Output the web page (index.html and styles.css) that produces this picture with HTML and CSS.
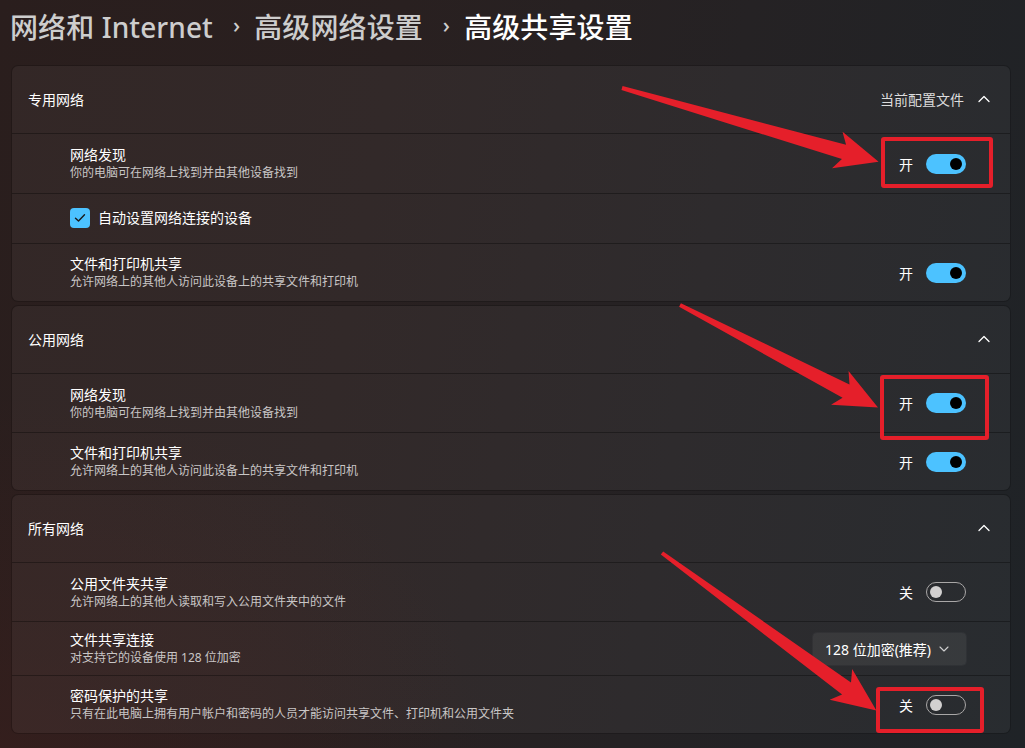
FILE: index.html
```html
<!DOCTYPE html>
<html lang="zh-CN">
<head>
<meta charset="utf-8">
<title>高级共享设置</title>
<link rel="stylesheet" href="styles.css">
</head>
<body>
<div class="page">
  <h1 class="crumbs">
    <span class="crumb">网络和 Internet</span>
    <span class="sep">›</span>
    <span class="crumb">高级网络设置</span>
    <span class="sep">›</span>
    <span class="crumb current">高级共享设置</span>
  </h1>

  <section class="card">
    <div class="head">
      <span class="head-title">专用网络</span>
      <span class="head-note">当前配置文件</span>
      <span class="chev"><svg width="12" height="8" viewBox="0 0 12 8"><path d="M1 6.5 L6 1.5 L11 6.5" fill="none" stroke="#fff" stroke-width="1.3" stroke-linecap="round" stroke-linejoin="round"/></svg></span>
    </div>
    <div class="row r60">
      <div class="text"><div class="t">网络发现</div><div class="s">你的电脑可在网络上找到并由其他设备找到</div></div>
      <div class="ctrl"><span class="state">开</span><span class="toggle on"><span class="knob"></span></span></div>
    </div>
    <div class="row r50">
      <label class="check"><span class="box"><svg width="12" height="10" viewBox="0 0 12 10"><path d="M1.5 5.2 L4.5 8 L10.5 1.8" fill="none" stroke="#1a1a1a" stroke-width="1.4" stroke-linecap="round" stroke-linejoin="round"/></svg></span><span class="t">自动设置网络连接的设备</span></label>
    </div>
    <div class="row r58">
      <div class="text"><div class="t">文件和打印机共享</div><div class="s">允许网络上的其他人访问此设备上的共享文件和打印机</div></div>
      <div class="ctrl"><span class="state">开</span><span class="toggle on"><span class="knob"></span></span></div>
    </div>
  </section>

  <section class="card">
    <div class="head">
      <span class="head-title">公用网络</span>
      <span class="chev"><svg width="12" height="8" viewBox="0 0 12 8"><path d="M1 6.5 L6 1.5 L11 6.5" fill="none" stroke="#fff" stroke-width="1.3" stroke-linecap="round" stroke-linejoin="round"/></svg></span>
    </div>
    <div class="row r59">
      <div class="text"><div class="t">网络发现</div><div class="s">你的电脑可在网络上找到并由其他设备找到</div></div>
      <div class="ctrl"><span class="state">开</span><span class="toggle on"><span class="knob"></span></span></div>
    </div>
    <div class="row r58">
      <div class="text"><div class="t">文件和打印机共享</div><div class="s">允许网络上的其他人访问此设备上的共享文件和打印机</div></div>
      <div class="ctrl"><span class="state">开</span><span class="toggle on"><span class="knob"></span></span></div>
    </div>
  </section>

  <section class="card">
    <div class="head">
      <span class="head-title">所有网络</span>
      <span class="chev"><svg width="12" height="8" viewBox="0 0 12 8"><path d="M1 6.5 L6 1.5 L11 6.5" fill="none" stroke="#fff" stroke-width="1.3" stroke-linecap="round" stroke-linejoin="round"/></svg></span>
    </div>
    <div class="row r59">
      <div class="text"><div class="t">公用文件夹共享</div><div class="s">允许网络上的其他人读取和写入公用文件夹中的文件</div></div>
      <div class="ctrl"><span class="state">关</span><span class="toggle off"><span class="knob"></span></span></div>
    </div>
    <div class="row r54">
      <div class="text"><div class="t">文件共享连接</div><div class="s">对支持它的设备使用 128 位加密</div></div>
      <div class="ctrl"><span class="select">128 位加密(推荐)<svg width="10" height="6" viewBox="0 0 10 6"><path d="M1 1 L5 5 L9 1" fill="none" stroke="#cfcfcf" stroke-width="1.1" stroke-linecap="round" stroke-linejoin="round"/></svg></span></div>
    </div>
    <div class="row r58">
      <div class="text"><div class="t">密码保护的共享</div><div class="s">只有在此电脑上拥有用户帐户和密码的人员才能访问共享文件、打印机和公用文件夹</div></div>
      <div class="ctrl"><span class="state">关</span><span class="toggle off"><span class="knob"></span></span></div>
    </div>
  </section>
</div>

<svg class="marks" width="1025" height="748" viewBox="0 0 1025 748">
  <g fill="#e51f2a">
    <g transform="translate(622,88) rotate(16.06)">
      <polygon points="0,-2 231,-7.5 224,-19 267,0 224,19 231,7.5 0,2"/>
    </g>
    <g transform="translate(680,305) rotate(27.4)">
      <polygon points="0,-2 187,-7.5 180,-19 223,0 180,19 187,7.5 0,2"/>
    </g>
    <g transform="translate(662,553) rotate(36.3)">
      <polygon points="0,-2 229,-7.5 222,-19 266,0 222,19 229,7.5 0,2"/>
    </g>
  </g>
  <g fill="none" stroke="#e51f2a" stroke-width="4">
    <rect x="883" y="139" width="108" height="47" rx="1"/>
    <rect x="882" y="377" width="105" height="61" rx="1"/>
    <rect x="878" y="689" width="104" height="42" rx="1"/>
  </g>
</svg>
</body>
</html>
```

FILE: styles.css
```css
html, body {
  margin: 0;
  padding: 0;
}
body {
  width: 1025px;
  height: 748px;
  overflow: hidden;
  position: relative;
  font-family: "Noto Sans", "Noto Sans CJK SC", sans-serif;
  color: #fff;
  background:
    radial-gradient(ellipse 700px 500px at 0% 100%, rgba(60, 30, 28, 0.55), rgba(60, 30, 28, 0) 70%),
    linear-gradient(100deg, #2a1e1d 0%, #292020 35%, #252224 65%, #1f2327 100%);
}
.page {
  padding: 0 15px 0 12px;
}
.crumbs {
  margin: 0 0 14px -2px;
  height: 52px;
  display: flex;
  align-items: center;
  font-size: 28px;
  font-weight: 500;
  letter-spacing: 0.1px;
  white-space: nowrap;
}
.crumb {
  color: #cdcdcd;
}
.crumb.current {
  color: #ffffff;
}
.sep {
  color: #cdcdcd;
  font-size: 22px;
  margin: 0 14px 0 20px;
  position: relative;
  top: -2px;
}
.card {
  background: rgba(255, 255, 255, 0.045);
  border-radius: 6px;
  box-shadow: 0 0 0 1px rgba(0, 0, 0, 0.18);
  margin-bottom: 5px;
  overflow: hidden;
}
.head {
  box-sizing: border-box;
  height: 67px;
  display: flex;
  align-items: center;
  padding: 0 10px 2px 16px;
  font-size: 14px;
}
.head-title {
  flex: 1;
  color: #fff;
}
.head-note {
  color: #dcdcdc;
  margin-right: 4px;
}
.chev {
  width: 32px;
  height: 32px;
  display: flex;
  align-items: center;
  justify-content: center;
}
.row {
  box-sizing: border-box;
  border-top: 1px solid rgba(0, 0, 0, 0.32);
  display: flex;
  align-items: center;
  padding: 0 44px 0 58px;
}
.r60 { height: 60px; }
.r59 { height: 59px; }
.r58 { height: 58px; }
.r54 { height: 54px; }
.r50 { height: 50px; }
.text {
  flex: 1;
  display: flex;
  flex-direction: column;
}
.t {
  font-size: 14px;
  line-height: 18px;
  color: #fff;
}
.s {
  font-size: 12px;
  line-height: 17px;
  color: #c9c6c6;
}
.ctrl {
  display: flex;
  align-items: center;
}
.state {
  font-size: 14px;
  color: #fff;
  margin-right: 13px;
}
.toggle {
  box-sizing: border-box;
  width: 40px;
  height: 20px;
  border-radius: 10px;
  display: flex;
  align-items: center;
  padding: 0 4px;
}
.toggle .knob {
  width: 12px;
  height: 12px;
  border-radius: 50%;
}
.toggle.on {
  background: #4cc2ff;
  justify-content: flex-end;
}
.toggle.on .knob {
  background: #000;
}
.toggle.off {
  border: 1px solid #a9a7a7;
  padding: 0 3px;
}
.toggle.off .knob {
  background: #d2d0d0;
}
.check {
  display: flex;
  align-items: center;
  margin-top: -1px;
}
.box {
  width: 20px;
  height: 20px;
  border-radius: 4px;
  background: #4cc2ff;
  display: flex;
  align-items: center;
  justify-content: center;
  margin-right: 8px;
}
.select {
  box-sizing: border-box;
  width: 153px;
  height: 32px;
  border-radius: 4px;
  background: rgba(255, 255, 255, 0.065);
  box-shadow: 0 0 0 1px rgba(255, 255, 255, 0.03);
  display: flex;
  align-items: center;
  justify-content: space-between;
  padding: 0 17px 0 12px;
  font-size: 14px;
  color: #fff;
}
.marks {
  position: absolute;
  top: 0;
  left: 0;
  pointer-events: none;
}
```
